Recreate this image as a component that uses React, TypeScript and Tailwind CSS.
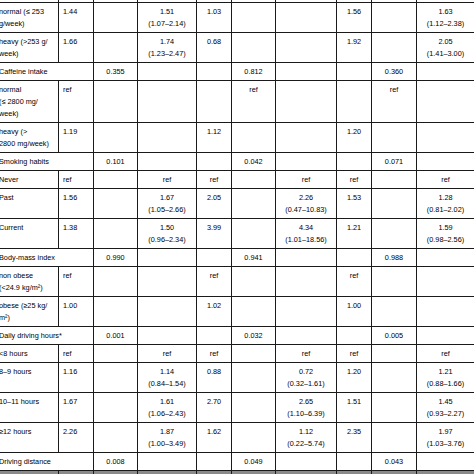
type Cell = string | string[]
type Row = { label: string[]; span?: boolean; cells: Cell[] }

// span rows: label covers cols 1–2, cells start at col 3
const ROWS: Row[] = [
  { label: ['normal (≤ 253', 'g/week)'], cells: ['1.44', '', ['1.51', '(1.07–2.14)'], '1.03', '', '', '1.56', '', ['1.63', '(1.12–2.38)']] },
  { label: ['heavy (>253 g/', 'week)'], cells: ['1.66', '', ['1.74', '(1.23–2.47)'], '0.68', '', '', '1.92', '', ['2.05', '(1.41–3.00)']] },
  { label: ['Caffeine intake'], span: true, cells: ['0.355', '', '', '0.812', '', '', '0.360', ''] },
  { label: ['normal', '(≤ 2800 mg/', 'week)'], cells: ['ref', '', '', '', 'ref', '', '', 'ref', ''] },
  { label: ['heavy (>', '2800 mg/week)'], cells: ['1.19', '', '', '1.12', '', '', '1.20', '', ''] },
  { label: ['Smoking habits'], span: true, cells: ['0.101', '', '', '0.042', '', '', '0.071', ''] },
  { label: ['Never'], cells: ['ref', '', 'ref', 'ref', '', 'ref', 'ref', '', 'ref'] },
  { label: ['Past'], cells: ['1.56', '', ['1.67', '(1.05–2.66)'], '2.05', '', ['2.26', '(0.47–10.83)'], '1.53', '', ['1.28', '(0.81–2.02)']] },
  { label: ['Current'], cells: ['1.38', '', ['1.50', '(0.96–2.34)'], '3.99', '', ['4.34', '(1.01–18.56)'], '1.21', '', ['1.59', '(0.98–2.56)']] },
  { label: ['Body-mass index'], span: true, cells: ['0.990', '', '', '0.941', '', '', '0.988', ''] },
  { label: ['non obese', '(<24.9 kg/m²)'], cells: ['ref', '', '', 'ref', '', '', 'ref', '', ''] },
  { label: ['obese (≥25 kg/', 'm²)'], cells: ['1.00', '', '', '1.02', '', '', '1.00', '', ''] },
  { label: ['Daily driving hours*'], span: true, cells: ['0.001', '', '', '0.032', '', '', '0.005', ''] },
  { label: ['<8 hours'], cells: ['ref', '', 'ref', 'ref', '', 'ref', 'ref', '', 'ref'] },
  { label: ['8–9 hours'], cells: ['1.16', '', ['1.14', '(0.84–1.54)'], '0.88', '', ['0.72', '(0.32–1.61)'], '1.20', '', ['1.21', '(0.88–1.66)']] },
  { label: ['10–11 hours'], cells: ['1.67', '', ['1.61', '(1.06–2.43)'], '2.70', '', ['2.65', '(1.10–6.39)'], '1.51', '', ['1.45', '(0.93–2.27)']] },
  { label: ['≥12 hours'], cells: ['2.26', '', ['1.87', '(1.00–3.49)'], '1.62', '', ['1.12', '(0.22–5.74)'], '2.35', '', ['1.97', '(1.03–3.76)']] },
  { label: ['Driving distance'], span: true, cells: ['0.008', '', '', '0.049', '', '', '0.043', ''] },
]

const COLS = Array.from({ length: 10 }, (_, i) => i)

function Lines({ v }: { v: Cell }) {
  const parts = Array.isArray(v) ? v : v ? [v] : []
  return (
    <>
      {parts.map((p, i) => (
        <div key={i} className="whitespace-nowrap">{p}</div>
      ))}
    </>
  )
}

export default function App() {
  return (
    <div className="h-[474px] w-[474px] overflow-hidden bg-white">
      <div
        className="-ml-[6px] grid w-max grid-cols-[63px_34px_43px_58px_34px_43px_60px_34px_44px_57px] gap-px bg-[#1a1a1a] pl-px pr-px text-[7.3px] leading-[12px] text-black"
        style={{ fontFamily: '"Liberation Sans", Arial, sans-serif' }}
      >
        {COLS.map((c) => (
          <div key={`top-${c}`} className="h-[2px] bg-white" />
        ))}

        {ROWS.map((r, ri) => (
          <div key={ri} className="contents">
            <div className={`bg-white pl-[4px] pt-[3px] pb-[2px] ${r.span ? 'col-span-2' : ''}`}>
              <Lines v={r.label} />
            </div>
            {r.cells.map((v, ci) => {
              const left = !r.span && ci === 0
              return (
                <div
                  key={ci}
                  className={`bg-white pt-[3px] pb-[2px] ${left ? 'pl-[4px] text-left' : 'text-center'}`}
                >
                  <Lines v={v} />
                </div>
              )
            })}
          </div>
        ))}

        {COLS.map((c) => (
          <div key={`bot-${c}`} className="h-[20px] bg-[#8a8a8a]" />
        ))}
      </div>
    </div>
  )
}
